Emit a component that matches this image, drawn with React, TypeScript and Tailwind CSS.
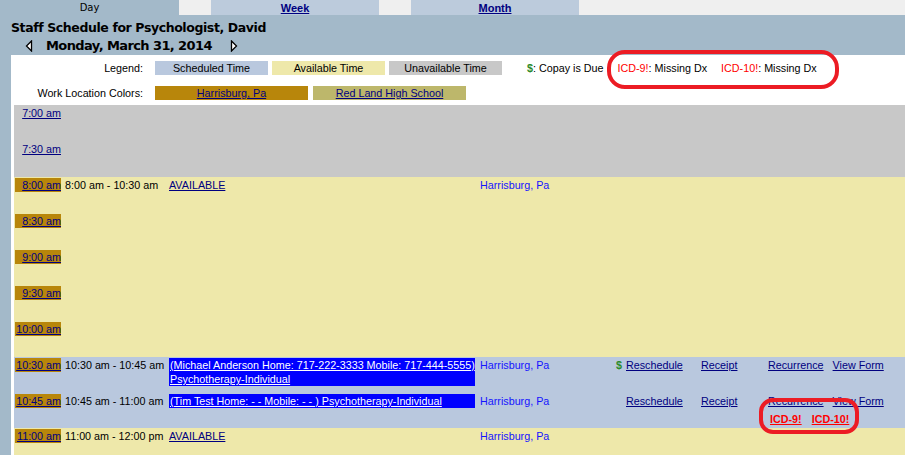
import type { ReactNode } from 'react'

const link = 'text-[#000080] underline'

type SlotProps = {
  bg: string
  height: string
  label: string
  labelBg?: boolean
  children?: ReactNode
}

function Slot({ bg, height, label, labelBg = false, children }: SlotProps) {
  return (
    <div className={['flex items-start pt-[1px]', bg, height].join(' ')}>
      <div
        className={[
          'ml-[1px] h-[14px] w-[46px] shrink-0 text-right leading-[14px]',
          labelBg ? 'bg-[#b8860b]' : ''
        ].join(' ')}
      >
        <span className={link}>{label}</span>
      </div>
      {children}
    </div>
  )
}

function Appointment({
  time,
  description,
  copay = false,
  showIcd = false
}: {
  time: string
  description: ReactNode
  copay?: boolean
  showIcd?: boolean
}) {
  return (
    <>
      <div className="w-[108px] shrink-0 pl-[4px] leading-[14px] text-black">{time}</div>
      <div className="w-[306px] shrink-0 bg-[#0000ff] pl-[1px] leading-[14px]">
        <span className="text-white underline">{description}</span>
      </div>
      <div className="w-[141px] shrink-0 pl-[5px] leading-[14px] text-[#1414ff]">Harrisburg, Pa</div>
      <div className="w-[10px] shrink-0 leading-[14px] font-bold text-[#2a8a2a]">{copay ? '$' : ''}</div>
      <div className="w-[75px] shrink-0 leading-[14px]">
        <span className={link}>Reschedule</span>
      </div>
      <div className="w-[67px] shrink-0 leading-[14px]">
        <span className={link}>Receipt</span>
      </div>
      <div className="flex flex-col leading-[14px]">
        <div className="flex gap-[9px]">
          <span className={link}>Recurrence</span>
          <span className={link}>View Form</span>
        </div>
        {showIcd ? (
          <div className="mt-[4px] flex gap-[10px] pl-[2px] font-bold">
            <span className="text-[#ff0000] underline">ICD-9!</span>
            <span className="text-[#ff0000] underline">ICD-10!</span>
          </div>
        ) : null}
      </div>
    </>
  )
}

function Available({ time }: { time: string }) {
  return (
    <>
      <div className="w-[108px] shrink-0 pl-[4px] leading-[14px] text-black">{time}</div>
      <div className="w-[306px] shrink-0 leading-[14px]">
        <span className={link}>AVAILABLE</span>
      </div>
      <div className="shrink-0 pl-[5px] leading-[14px] text-[#1414ff]">Harrisburg, Pa</div>
    </>
  )
}

function Arrow({ dir }: { dir: 'left' | 'right' }) {
  return (
    <svg width="8" height="12" viewBox="0 0 8 12" aria-hidden="true">
      <path
        d={dir === 'left' ? 'M6.5 1 L1.5 6 L6.5 11 Z' : 'M1.5 1 L6.5 6 L1.5 11 Z'}
        fill="#ffffff"
        stroke="#000000"
        strokeWidth="1.3"
      />
    </svg>
  )
}

export default function App() {
  const yellow = 'bg-[#eee8aa]'
  const gray = 'bg-[#c8c8c8]'
  const blue = 'bg-[#b9c8de]'

  return (
    <div className="relative h-[455px] w-[905px] overflow-hidden bg-[#a3b9c9] font-['Liberation_Sans',Arial,sans-serif] text-[10.75px] text-black">
      {/* tabs */}
      <div className="flex h-[15px] bg-[#efefef] text-[11px] leading-[16px]">
        <div className="w-[179px] bg-[#a3b9c9] text-center font-['DejaVu_Sans',sans-serif] text-[10px]">Day</div>
        <div className="ml-[32px] w-[168px] bg-[#bccbdc] text-center font-bold">
          <span className={link}>Week</span>
        </div>
        <div className="ml-[32px] w-[168px] bg-[#bccbdc] text-center font-bold">
          <span className={link}>Month</span>
        </div>
      </div>

      {/* heading */}
      <div className="h-[40px] pl-[11px] pt-[5px] font-['DejaVu_Sans',sans-serif] font-bold">
        <div className="text-[12.5px] leading-[15px] tracking-[-0.4px]">Staff Schedule for Psychologist, David</div>
        <div className="mt-[3px] flex items-center pl-[14px] text-[13px] leading-[15px] tracking-[-0.6px]">
          <Arrow dir="left" />
          <span className="ml-[13px]">Monday, March 31, 2014</span>
          <span className="ml-[18px] flex">
            <Arrow dir="right" />
          </span>
        </div>
      </div>

      {/* white panel */}
      <div className="ml-[11px] bg-white">
        <div className="h-[50px] pt-[6px]">
          <div className="flex h-[14px] items-center leading-[14px]">
            <div className="w-[132px] text-right">Legend:</div>
            <div className="ml-[12px] flex gap-[4px]">
              <div className="w-[113px] bg-[#b9c8de] text-center">Scheduled Time</div>
              <div className="w-[113px] bg-[#eee8aa] text-center">Available Time</div>
              <div className="w-[113px] bg-[#c8c8c8] text-center">Unavailable Time</div>
            </div>
            <div className="ml-[25px]">
              <span className="font-bold text-[#2a8a2a]">$</span>: Copay is Due
            </div>
            <div className="ml-[14px]">
              <span className="text-[#ff0000]">ICD-9!</span>: Missing Dx
            </div>
            <div className="ml-[14px]">
              <span className="text-[#ff0000]">ICD-10!</span>: Missing Dx
            </div>
          </div>
          <div className="mt-[11px] flex h-[14px] items-center leading-[14px]">
            <div className="w-[132px] text-right">Work Location Colors:</div>
            <div className="ml-[12px] flex gap-[5px]">
              <div className="w-[153px] bg-[#b8860b] text-center">
                <span className={link}>Harrisburg, Pa</span>
              </div>
              <div className="w-[153px] bg-[#bdb76b] text-center">
                <span className={link}>Red Land High School</span>
              </div>
            </div>
          </div>
        </div>

        {/* schedule */}
        <div className="ml-[3px] flex flex-col">
          <Slot bg={gray} height="h-[36px]" label="7:00 am" />
          <Slot bg={gray} height="h-[36px]" label="7:30 am" />
          <Slot bg={yellow} height="h-[36px]" label="8:00 am" labelBg>
            <Available time="8:00 am - 10:30 am" />
          </Slot>
          <Slot bg={yellow} height="h-[36px]" label="8:30 am" labelBg />
          <Slot bg={yellow} height="h-[36px]" label="9:00 am" labelBg />
          <Slot bg={yellow} height="h-[36px]" label="9:30 am" labelBg />
          <Slot bg={yellow} height="h-[36px]" label="10:00 am" labelBg />
          <Slot bg={blue} height="h-[36px]" label="10:30 am" labelBg>
            <Appointment
              time="10:30 am - 10:45 am"
              copay
              description={
                <>
                  (Michael Anderson Home: 717-222-3333 Mobile: 717-444-5555)
                  <br />
                  Psychotherapy-Individual
                </>
              }
            />
          </Slot>
          <Slot bg={blue} height="h-[35px]" label="10:45 am" labelBg>
            <Appointment
              time="10:45 am - 11:00 am"
              showIcd
              description="(Tim Test Home: - - Mobile: - - ) Psychotherapy-Individual"
            />
          </Slot>
          <Slot bg={yellow} height="h-[36px]" label="11:00 am" labelBg>
            <Available time="11:00 am - 12:00 pm" />
          </Slot>
        </div>
      </div>

      {/* red annotation marks */}
      <svg className="pointer-events-none absolute left-0 top-0" width="905" height="455" aria-hidden="true">
        <rect x="609" y="52" width="228" height="35" rx="16" fill="none" stroke="#ec1c24" strokeWidth="4" />
        <rect x="761" y="400" width="96" height="32" rx="12" fill="none" stroke="#ec1c24" strokeWidth="4" />
      </svg>
    </div>
  )
}
